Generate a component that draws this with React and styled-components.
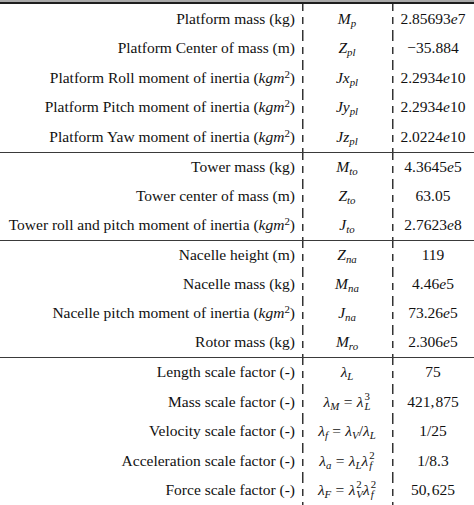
import React from 'react'
import styled, { createGlobalStyle } from 'styled-components'

const Global = createGlobalStyle`
  html, body {
    margin: 0;
    padding: 0;
    background: #fff;
    font-family: "Times New Roman", "Liberation Serif", serif;
  }
`;

const Table = styled.div`
  width: 474px;
  height: 505px;
  display: flex;
  flex-direction: column;
  overflow: hidden;
  font-family: "Times New Roman", "Liberation Serif", serif;
  font-size: 15.5px;
  color: #111;
`;

const TopRule = styled.div`
  height: 2px;
  background: #a9a9a9;
  border-bottom: 2px solid #1e1e1e;
`;

const BottomRule = styled.div`
  flex: 1;
  background: #dcdcdc;
`;

const Section = styled.div`
  border-top: ${p => (p.first ? 'none' : '1.5px solid #3a3a3a')};
`;

const Row = styled.div`
  display: grid;
  grid-template-columns: 302px 90px 82px;
  height: ${p => p.h || 29}px;
  align-items: stretch;
`;

const dashed = `
  background-image: repeating-linear-gradient(to bottom, #333 0 7px, transparent 7px 13px);
  background-size: 1.5px 100%;
  background-repeat: no-repeat;
  background-position: left top;
`;

const Label = styled.div`
  display: flex;
  align-items: center;
  justify-content: flex-end;
  padding-right: 7px;
  white-space: nowrap;
`;

const Cell = styled.div`
  display: flex;
  align-items: center;
  justify-content: center;
  white-space: nowrap;
  ${dashed}
`;

const Text = styled.span`
  display: inline-block;
  line-height: 1.2;
`;

const I = styled.i`
  font-style: italic;
`;

const Sub = styled.sub`
  font-size: 0.7em;
  font-style: italic;
  vertical-align: -0.3em;
  line-height: 0;
`;

const Sup = styled.sup`
  font-size: 0.7em;
  vertical-align: 0.5em;
  line-height: 0;
`;

const Stack = styled.span`
  display: inline-flex;
  flex-direction: column;
  font-size: 0.7em;
  line-height: 0.9;
  vertical-align: 0.6em;
  margin-left: 1px;

  span:last-child {
    font-style: italic;
  }
`;

const Eq = styled.span`
  margin: 0 0.28em;
`;

const Unit = () => (
  <>
    (<I>kgm</I>
    <Sup>2</Sup>)
  </>
);

const L = ({ s }) => (
  <>
    <I>λ</I>
    <Sub>{s}</Sub>
  </>
);

const LS = ({ s, p }) => (
  <>
    <I>λ</I>
    <Stack>
      <span>{p}</span>
      <span>{s}</span>
    </Stack>
  </>
);

const E = ({ m, x }) => (
  <>
    {m}
    <I>e</I>
    {x}
  </>
);

const sections = [
  [
    ['Platform mass (kg)', <><I>M</I><Sub>p</Sub></>, <E m="2.85693" x="7" />],
    ['Platform Center of mass (m)', <><I>Z</I><Sub>pl</Sub></>, '−35.884'],
    [<>Platform Roll moment of inertia <Unit /></>, <><I>Jx</I><Sub>pl</Sub></>, <E m="2.2934" x="10" />],
    [<>Platform Pitch moment of inertia <Unit /></>, <><I>Jy</I><Sub>pl</Sub></>, <E m="2.2934" x="10" />],
    [<>Platform Yaw moment of inertia <Unit /></>, <><I>Jz</I><Sub>pl</Sub></>, <E m="2.0224" x="10" />],
  ],
  [
    ['Tower mass (kg)', <><I>M</I><Sub>to</Sub></>, <E m="4.3645" x="5" />],
    ['Tower center of mass (m)', <><I>Z</I><Sub>to</Sub></>, '63.05'],
    [<>Tower roll and pitch moment of inertia <Unit /></>, <><I>J</I><Sub>to</Sub></>, <E m="2.7623" x="8" />],
  ],
  [
    ['Nacelle height (m)', <><I>Z</I><Sub>na</Sub></>, '119'],
    ['Nacelle mass (kg)', <><I>M</I><Sub>na</Sub></>, <E m="4.46" x="5" />],
    [<>Nacelle pitch moment of inertia <Unit /></>, <><I>J</I><Sub>na</Sub></>, <E m="73.26" x="5" />],
    ['Rotor mass (kg)', <><I>M</I><Sub>ro</Sub></>, <E m="2.306" x="5" />],
  ],
  [
    ['Length scale factor (-)', <L s="L" />, '75'],
    ['Mass scale factor (-)', <><L s="M" /><Eq>=</Eq><LS p="3" s="L" /></>, '421,\u200A875'],
    ['Velocity scale factor (-)', <><L s="f" /><Eq>=</Eq><L s="V" />/<L s="L" /></>, '1/25'],
    ['Acceleration scale factor (-)', <><L s="a" /><Eq>=</Eq><L s="L" /><LS p="2" s="f" /></>, '1/8.3'],
    ['Force scale factor (-)', <><L s="F" /><Eq>=</Eq><LS p="2" s="V" /><LS p="2" s="f" /></>, '50,\u200A625'],
  ],
];

const heights = [29.6, 29, 29, 29.4];

export default function App() {
  return (
    <>
      <Global />
      <Table>
        <TopRule />
        {sections.map((rows, si) => (
          <Section key={si} first={si === 0}>
            {rows.map(([label, sym, val], ri) => (
              <Row key={ri} h={heights[si]}>
                <Label><Text>{label}</Text></Label>
                <Cell><Text>{sym}</Text></Cell>
                <Cell><Text>{val}</Text></Cell>
              </Row>
            ))}
          </Section>
        ))}
        <BottomRule />
      </Table>
    </>
  );
}
